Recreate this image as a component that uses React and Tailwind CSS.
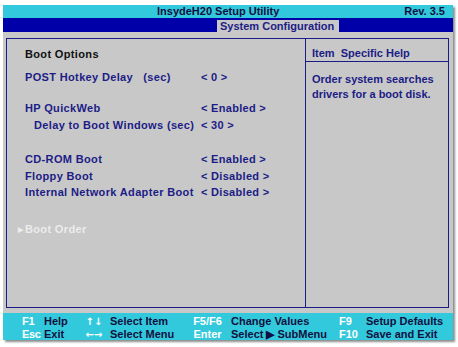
import React from "react";

const F = { fontFamily: '"Liberation Sans", Arial, sans-serif' };

function Row({ label, value, mt, indent, dark }) {
  return (
    <div className={`flex h-[16px] items-center ${mt}`}>
      <div className={`w-[194px] shrink-0 pl-[18px] whitespace-pre tracking-[0.35px] ${dark ? "text-[#101010]" : "text-[#1c1c86]"}`}>
        <span className={indent ? "pl-[9px]" : ""}>{label}</span>
      </div>
      {value && <div className="text-[#1c1c86] whitespace-pre tracking-[0.3px]">{value}</div>}
    </div>
  );
}

function FootRow({ cells }) {
  return (
    <div className="flex h-[13px] items-center whitespace-nowrap">
      <div className="w-[19px]" />
      <div className="w-[22px] text-white tracking-[-0.3px]">{cells[0]}</div>
      <div className="w-[39px] text-[#101040]">{cells[1]}</div>
      <div className="w-[22px] text-center text-white text-[10px] font-['DejaVu_Sans',sans-serif]">{cells[2]}</div>
      <div className="w-[5px]" />
      <div className="w-[83px] text-[#101040]">{cells[3]}</div>
      <div className="w-[29px] text-center text-white">{cells[4]}</div>
      <div className="w-[9px]" />
      <div className="w-[108px] text-[#101040] whitespace-pre">{cells[5]}</div>
      <div className="w-[27px] text-white">{cells[6]}</div>
      <div className="text-[#101040]">{cells[7]}</div>
    </div>
  );
}

export default function App() {
  return (
    <div className="w-[458px] h-[347px] bg-white overflow-hidden" style={F}>
      <div className="ml-[3px] mt-[5px] w-[450px] h-[335px] flex flex-col font-bold text-[11px] leading-none whitespace-nowrap shadow-[2px_2px_2px_rgba(0,0,0,0.45)]">
        {/* Title bar */}
        <div className="h-[13px] bg-[#33c9dc] flex items-center text-[#101040]">
          <div className="pl-[154px]">InsydeH20 Setup Utility</div>
          <div className="ml-auto pr-[8px]">Rev. 3.5</div>
        </div>
        {/* Menu bar */}
        <div className="h-[14px] bg-[#0000a8] flex items-end">
          <div className="ml-[214px] w-[122px] h-[12px] bg-[#c8c8c8] text-[#1c1c86] flex items-center pl-[3px] overflow-hidden">
            System Configuration
          </div>
        </div>
        {/* Body */}
        <div className="h-[281px] bg-[#c8c8c8] pt-[6px] pl-[3px] pr-[4px] pb-[5px]">
          <div className="h-full border border-[#1c1c86] flex">
            <div className="w-[298px] shrink-0">
              <Row label="Boot Options" mt="mt-[7px]" dark />
              <Row label={"POST Hotkey Delay   (sec)"} value="< 0 >" mt="mt-[7px]" />
              <Row label="HP QuickWeb" value="< Enabled >" mt="mt-[15px]" />
              <Row label="Delay to Boot Windows (sec)" value="< 30 >" mt="mt-[1px]" indent />
              <Row label="CD-ROM Boot" value="< Enabled >" mt="mt-[18px]" />
              <Row label="Floppy Boot" value="< Disabled >" mt="mt-[1px]" />
              <Row label="Internal Network Adapter Boot" value="< Disabled >" mt="mt-0" />
              <div className="flex h-[16px] items-center mt-[21px] text-[#ececec] tracking-[0.35px]">
                <span className="pl-[11px] w-[18px] text-[7px]">▶</span>
                <span>Boot Order</span>
              </div>
            </div>
            <div className="flex-1 border-l border-[#1c1c86] flex flex-col">
              <div className="h-[23px] border-b border-[#1c1c86] pl-[6px] pt-[9px] text-[#1c1c86]">
                Item&nbsp; Specific Help
              </div>
              <div className="pl-[6px] pt-[10px] text-[#1c1c86] leading-[15px]">
                <div>Order system searches</div>
                <div>drivers for a boot disk.</div>
              </div>
            </div>
          </div>
        </div>
        {/* Footer */}
        <div className="h-[27px] bg-[#33c9dc] pt-[2px]">
          <FootRow cells={["F1", "Help", "↑↓", "Select Item", "F5/F6", "Change Values", "F9", "Setup Defaults"]} />
          <FootRow cells={["Esc", "Exit", "←→", "Select Menu", "Enter", "Select ▶ SubMenu", "F10", "Save and Exit"]} />
        </div>
      </div>
    </div>
  );
}
